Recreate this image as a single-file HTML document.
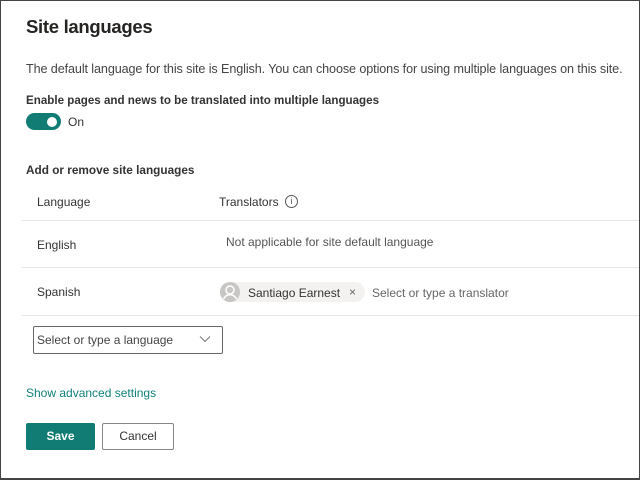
<!DOCTYPE html>
<html><head><style>
*{margin:0;padding:0;box-sizing:border-box}
body{width:640px;height:480px;overflow:hidden;background:#fff;font-family:"Liberation Sans",sans-serif;color:#323130;position:relative}
.frame{position:absolute;left:0;top:0;width:640px;height:480px;border:1px solid #444;border-width:1px 1px 2px 1px}
.a{position:absolute;white-space:nowrap;line-height:1}
.hr{position:absolute;left:22px;right:1px;height:1px;background:#e6e6e6}
</style></head><body>
<div class="frame"></div>
<div class="a" style="left:26px;top:18px;font-size:18.5px;font-weight:bold;color:#252423;letter-spacing:-0.3px">Site languages</div>
<div class="a" style="left:26px;top:63px;font-size:12.6px;color:#444;letter-spacing:-0.1px">The default language for this site is English. You can choose options for using multiple languages on this site.</div>
<div class="a" style="left:26px;top:95px;font-size:11.6px;font-weight:bold;color:#333">Enable pages and news to be translated into multiple languages</div>
<div class="a" style="left:26px;top:113px;width:35px;height:17px;border-radius:9px;background:#107c73"></div>
<div class="a" style="left:47px;top:117px;width:10px;height:10px;border-radius:50%;background:#fff"></div>
<div class="a" style="left:68px;top:116px;font-size:12px;color:#333">On</div>
<div class="a" style="left:26px;top:165px;font-size:11.8px;font-weight:bold;color:#333">Add or remove site languages</div>
<div class="a" style="left:37px;top:196px;font-size:12px;color:#333">Language</div>
<div class="a" style="left:219px;top:196px;font-size:12px;color:#333">Translators</div>
<div class="a" style="left:285px;top:195px;width:13px;height:13px;border:1px solid #555;border-radius:50%;font-size:9px;text-align:center;line-height:11px;color:#555">i</div>
<div class="hr" style="top:220px"></div>
<div class="a" style="left:37px;top:239px;font-size:12px;color:#333">English</div>
<div class="a" style="left:226px;top:236px;font-size:12px;color:#555">Not applicable for site default language</div>
<div class="hr" style="top:267px"></div>
<div class="a" style="left:37px;top:286px;font-size:12px;color:#333">Spanish</div>
<div class="a" style="left:220px;top:282px;width:145px;height:20px;border-radius:10px;background:#f3f2f1"></div>
<svg class="a" style="left:220px;top:282px" width="20" height="20" viewBox="0 0 20 20"><circle cx="10" cy="10" r="10" fill="#c8c6c4"/><circle cx="10" cy="8" r="4" fill="none" stroke="#fff" stroke-width="1.5"/><path d="M3.5 17c1.5-3 4-4.3 6.5-4.3s5 1.3 6.5 4.3" fill="none" stroke="#fff" stroke-width="1.5"/></svg>
<div class="a" style="left:248px;top:287px;font-size:12px;color:#333">Santiago Earnest</div>
<div class="a" style="left:349px;top:286px;font-size:12px;color:#666">×</div>
<div class="a" style="left:372px;top:287px;font-size:12px;color:#666">Select or type a translator</div>
<div class="hr" style="top:315px"></div>
<div class="a" style="left:33px;top:326px;width:190px;height:28px;border:1px solid #666;border-radius:2px"></div>
<div class="a" style="left:37px;top:334px;font-size:12px;color:#444">Select or type a language</div>
<svg class="a" style="left:199px;top:335px" width="12" height="8" viewBox="0 0 12 8"><path d="M1 1.5l5 5 5-5" fill="none" stroke="#777" stroke-width="1"/></svg>
<div class="a" style="left:26px;top:387px;font-size:12px;color:#0f7f7a">Show advanced settings</div>
<div class="a" style="left:26px;top:423px;width:69px;height:27px;background:#107c73;border-radius:2px;color:#fff;font-size:12px;font-weight:bold;text-align:center;line-height:27px">Save</div>
<div class="a" style="left:102px;top:423px;width:72px;height:27px;border:1px solid #8a8886;border-radius:2px;color:#333;font-size:12px;text-align:center;line-height:25px">Cancel</div>
</body></html>
